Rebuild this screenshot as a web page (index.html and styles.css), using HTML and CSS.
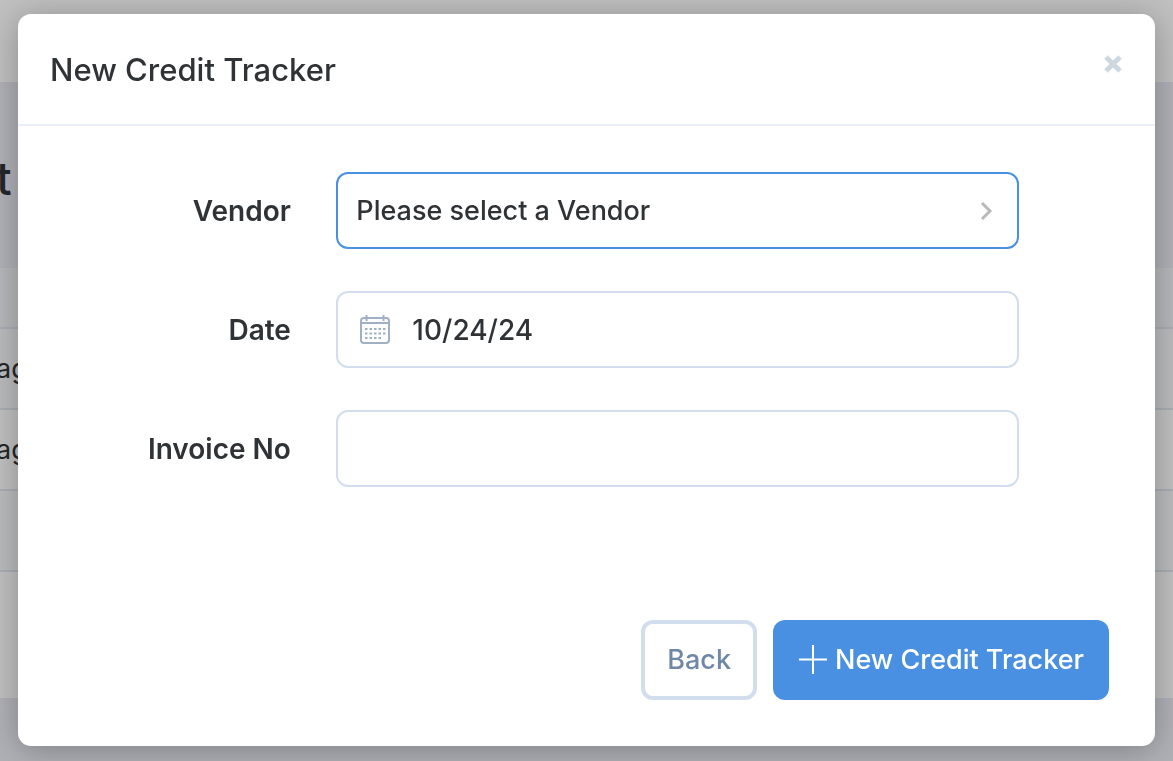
FILE: index.html
```html
<!doctype html>
<html lang="en">
  <head>
    <meta charset="UTF-8" />
    <meta name="viewport" content="width=device-width, initial-scale=1.0" />
    <title>New Credit Tracker</title>
    <link rel="stylesheet" href="styles.css">
  </head>
  <body>
    <!-- Page behind the modal -->
    <div class="page" aria-hidden="true">
      <div class="page-nav"></div>
      <div class="page-title">t</div>
      <div class="page-table">
        <div class="page-row page-row-head"></div>
        <div class="page-row page-row-alt">ag</div>
        <div class="page-row">ag</div>
        <div class="page-row page-row-alt"></div>
      </div>
    </div>

    <div class="overlay">
      <div class="modal" role="dialog" aria-labelledby="modal-title">
        <header class="modal-header">
          <h1 id="modal-title">New Credit Tracker</h1>
          <button type="button" class="close-button" aria-label="Close">
            <svg width="20" height="20" viewBox="0 0 20 20">
              <path d="M3 3l14 14M17 3L3 17" />
            </svg>
          </button>
        </header>

        <form class="modal-form">
          <div class="form-row">
            <label for="vendor">Vendor</label>
            <div class="field">
              <select id="vendor" class="control control-active">
                <option selected>Please select a Vendor</option>
              </select>
              <svg class="chevron" width="14" height="20" viewBox="0 0 14 20">
                <path d="M3 2l8 8-8 8" />
              </svg>
            </div>
          </div>

          <div class="form-row">
            <label for="date">Date</label>
            <div class="field">
              <svg class="calendar" width="30" height="30" viewBox="0 0 30 30">
                <rect x="1" y="3" width="28" height="25" rx="3" />
                <path d="M1 8h28M6.500 0v6M23.500 0v6" />
                <path class="calendar-days" d="M5 14h21M5 18.500h21M5 23h16" />
              </svg>
              <input type="text" id="date" class="control control-date" value="10/24/24" />
            </div>
          </div>

          <div class="form-row">
            <label for="invoice">Invoice No</label>
            <div class="field">
              <input type="text" id="invoice" class="control" />
            </div>
          </div>

          <div class="modal-actions">
            <button type="button" class="button button-back">Back</button>
            <button type="submit" class="button button-primary">
              <svg class="plus" width="30" height="30" viewBox="0 0 30 30">
                <path d="M15 0v29M1 14.500h28" />
              </svg>
              New Credit Tracker
            </button>
          </div>
        </form>
      </div>
    </div>
  </body>
</html>
```
FILE: styles.css
```css
:root {
  --primary-color: #4a90e2;
  --border-color: #d2deee;
  --text-color: #303336;
  --muted-color: #6f87a8;
  --icon-color: #a0b1c6;
  --page-bg: #eaebf3;
}

* {
  box-sizing: border-box;
  margin: 0;
  padding: 0;
}

body {
  font-family: Inter, "Liberation Sans", sans-serif;
  font-size: 27px;
  line-height: 36px;
  color: var(--text-color);
  overflow: hidden;
}

svg {
  fill: none;
  stroke: currentColor;
}

.page {
  min-height: 100vh;
  background-color: var(--page-bg);
  text-indent: -4px;
}

.page-nav {
  height: 82px;
  background-color: white;
}

.page-title {
  height: 186px;
  font-size: 46px;
  font-weight: 500;
  line-height: 192px;
}

.page-table {
  height: 430px;
  background-color: white;
}

.page-row {
  height: 81px;
  line-height: 80px;
  border-bottom: 2px solid #e3e6f0;
}

.page-row-head {
  height: 61px;
  background-color: #f3f4f8;
}

.page-row-alt {
  background-color: #f8f9fb;
}

.overlay {
  position: fixed;
  inset: 0;
  padding: 14px 18px;
  background-color: rgba(0, 0, 0, 0.25);
}

.modal {
  border-radius: 13px;
  background-color: white;
  box-shadow: 0 4px 32px rgba(0, 0, 0, 0.28);
}

.modal-header {
  display: flex;
  justify-content: space-between;
  align-items: flex-start;
  padding: 36px 32px 34px;
  border-bottom: 2px solid #ebf0f8;
}

h1 {
  font-size: 31px;
  font-weight: 450;
  line-height: 40px;
}

.close-button {
  padding: 4px 0;
  border: none;
  background: none;
  color: #ced8e1;
  line-height: 0;
  cursor: pointer;
}

.close-button svg {
  stroke-width: 5;
}

.modal-form {
  padding: 46px 0;
}

.form-row {
  display: grid;
  grid-template-columns: 24% 60%;
  column-gap: 4%;
  align-items: center;
  margin-bottom: 42px;
}

.form-row label {
  font-size: 28px;
  font-weight: 600;
  text-align: right;
}

.field {
  position: relative;
}

.control {
  display: block;
  width: 100%;
  height: 77px;
  padding: 0 18px;
  border: 2px solid var(--border-color);
  border-radius: 12px;
  background-color: white;
  color: inherit;
  font: inherit;
  font-weight: 450;
  appearance: none;
  outline: none;
}

.control-active,
.control:focus {
  border-color: var(--primary-color);
}

.control-date {
  padding-left: 74px;
  font-size: 28px;
}

.chevron,
.calendar {
  position: absolute;
  top: 0;
  bottom: 0;
  margin: auto 0;
  pointer-events: none;
}

.chevron {
  right: 26px;
  color: #b8b8b8;
  stroke-width: 3;
}

.calendar {
  left: 24px;
  color: var(--icon-color);
  stroke-width: 2;
}

.calendar-days {
  stroke-dasharray: 2.5 2;
}

.modal-actions {
  display: flex;
  justify-content: flex-end;
  gap: 16px;
  padding: 91px 46px 0;
}

.button {
  display: flex;
  align-items: center;
  gap: 7px;
  height: 80px;
  padding: 0 25px;
  border: none;
  border-radius: 12px;
  font: inherit;
  font-weight: 450;
  cursor: pointer;
}

.button-back {
  padding: 0 22px;
  border: 4px solid var(--border-color);
  background-color: white;
  color: var(--muted-color);
}

.button-primary {
  background-color: var(--primary-color);
  color: white;
}

.plus {
  stroke-width: 2;
}
```
